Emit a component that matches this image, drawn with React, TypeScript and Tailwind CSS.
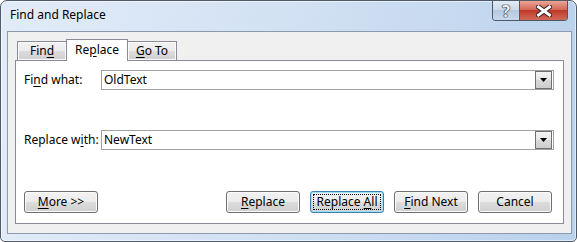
import React from "react";

const btnBg =
  "bg-[linear-gradient(#f2f2f2,#ebebeb_50%,#dddddd_50%,#cfcfcf)] shadow-[inset_0_0_0_1px_#fbfbfb]";

function U({ children }: { children: React.ReactNode }) {
  return <span className="underline underline-offset-2">{children}</span>;
}

function Button({ children, primary }: { children: React.ReactNode; primary?: boolean }) {
  if (primary) {
    return (
      <div className="flex h-[22px] w-[74px] rounded-[3px] border border-[#3c7fb1] bg-[linear-gradient(#f2f2f2,#ebebeb_50%,#dddddd_50%,#cfcfcf)] p-[2px] shadow-[inset_0_0_0_1px_#9fe0f8]">
        <span className="flex flex-1 items-center justify-center border border-dotted border-black">
          {children}
        </span>
      </div>
    );
  }
  return (
    <div
      className={`flex h-[22px] w-[74px] items-center justify-center rounded-[3px] border border-[#707070] ${btnBg}`}
    >
      {children}
    </div>
  );
}

function Combo({ value }: { value: string }) {
  return (
    <div className="flex h-[20px] flex-1 items-center border border-[#a2a2a2] bg-white">
      <span className="flex-1 pl-[2px]">{value}</span>
      <div className="mr-px flex h-[18px] w-[17px] items-center justify-center border border-[#707070] bg-[linear-gradient(#f4f4f4,#e6e6e6_50%,#d9d9d9_50%,#cdcdcd)]">
        <svg width="7" height="4" viewBox="0 0 7 4">
          <path d="M0 0h7L3.5 4z" fill="#000" />
        </svg>
      </div>
    </div>
  );
}

export default function App() {
  return (
    <div className="h-[242px] w-[577px] bg-white font-['Noto_Sans',sans-serif] text-[12px] text-black">
      <div className="flex h-full w-full flex-col rounded-t-[7px] rounded-b-[5px] border border-[#505b69] bg-[linear-gradient(100deg,#e2ecf8,#cfdff2_55%,#b9d1ec)] shadow-[inset_0_0_0_1px_rgba(255,255,255,0.55)]">
        {/* title bar */}
        <div className="flex h-[30px] items-start pl-[9px] pr-[8px]">
          <span className="pt-[6px] leading-[16px]">Find and Replace</span>
          <div className="ml-auto flex h-[20px] overflow-hidden rounded-b-[4px] border border-t-0 border-[#4a5868]">
            <div className="flex w-[27px] items-center justify-center border-r border-[#4a5868] bg-[linear-gradient(#e3ebf5,#cad8e8_50%,#b7c9de_50%,#c9d8ea)] text-[16px] font-bold leading-none text-[#eef1f5] [text-shadow:0_0_1px_#2b3440,0_0_1px_#2b3440,0_0_1px_#2b3440,0_0_1px_#2b3440]">
              ?
            </div>
            <div className="flex w-[47px] items-center justify-center bg-[linear-gradient(#eba596,#d4695a_45%,#c2392a_50%,#d06a58)]">
              <svg width="16" height="12" viewBox="0 0 16 12">
                <path d="M2.5 2L13.5 10M13.5 2L2.5 10" stroke="#3a2626" strokeWidth="5" strokeLinecap="square" />
                <path d="M2.5 2L13.5 10M13.5 2L2.5 10" stroke="#ffffff" strokeWidth="2.8" strokeLinecap="square" />
              </svg>
            </div>
          </div>
        </div>

        {/* client area */}
        <div className="mb-[7px] ml-[6px] mr-[4px] flex flex-1 flex-col border border-[#8b9aad] bg-[#f0f0f0] px-[7px] pb-[9px] pt-[7px]">
          {/* tabs */}
          <div className="flex h-[21px] items-end pl-[2px]">
            <div className={`flex h-[19px] w-[50px] items-center justify-center border border-b-0 border-[#898c95] ${btnBg}`}>
              Fin<U>d</U>
            </div>
            <div className="relative z-10 -mb-px -ml-px flex h-[22px] w-[62px] items-center justify-center border border-b-0 border-[#898c95] bg-white pb-[2px]">
              Re<U>p</U>lace
            </div>
            <div className={`-ml-px flex h-[19px] w-[50px] items-center justify-center border border-b-0 border-[#898c95] ${btnBg}`}>
              <U>G</U>o To
            </div>
          </div>

          {/* panel */}
          <div className="flex flex-1 flex-col border border-[#898c95] bg-white pb-[10px] pl-[8px] pr-[9px] pt-[9px]">
            <div className="flex items-center">
              <span className="w-[77px]">
                Fi<U>n</U>d what:
              </span>
              <Combo value="OldText" />
            </div>
            <div className="mt-[40px] flex items-center">
              <span className="w-[77px]">
                Replace w<U>i</U>th:
              </span>
              <Combo value="NewText" />
            </div>
            <div className="mt-auto flex items-center">
              <Button>
                <span>
                  <U>M</U>ore &gt;&gt;
                </span>
              </Button>
              <div className="ml-auto mr-[2px] flex gap-[10px]">
                <Button>
                  <span>
                    <U>R</U>eplace
                  </span>
                </Button>
                <Button primary>
                  <span>
                    Replace <U>A</U>ll
                  </span>
                </Button>
                <Button>
                  <span>
                    <U>F</U>ind Next
                  </span>
                </Button>
                <Button>Cancel</Button>
              </div>
            </div>
          </div>
        </div>
      </div>
    </div>
  );
}
